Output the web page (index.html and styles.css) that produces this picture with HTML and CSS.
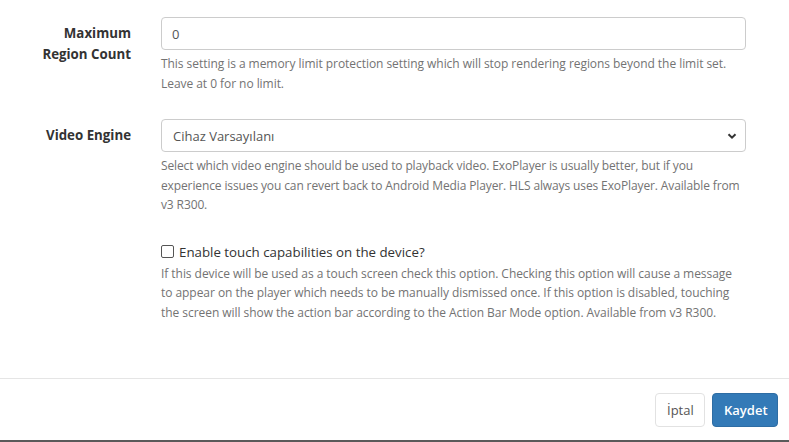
FILE: index.html
```html
<!DOCTYPE html>
<html>
<head>
<meta charset="utf-8">
<link rel="stylesheet" href="styles.css">
</head>
<body>
<div class="modal">
  <div class="body">
    <div class="row row-first">
      <label class="label">Maximum Region Count</label>
      <div class="control">
        <input class="input" type="text" value="0">
        <p class="help">This setting is a memory limit protection setting which will stop rendering regions beyond the limit set. Leave at 0 for no limit.</p>
      </div>
    </div>
    <div class="row row-second">
      <label class="label label-single">Video Engine</label>
      <div class="control">
        <div class="select">
          <span>Cihaz Varsayılanı</span>
          <svg class="chev" width="10" height="8" viewBox="0 0 10 8"><path d="M1.5 2.2 L5 5.7 L8.5 2.2" fill="none" stroke="#333" stroke-width="2"/></svg>
        </div>
        <p class="help help-tight">Select which video engine should be used to playback video. ExoPlayer is usually better, but if you experience issues you can revert back to Android Media Player. HLS always uses ExoPlayer. Available from v3 R300.</p>
      </div>
    </div>
    <div class="row row-third">
      <div class="label"></div>
      <div class="control">
        <label class="check"><span class="box"></span>Enable touch capabilities on the device?</label>
        <p class="help">If this device will be used as a touch screen check this option. Checking this option will cause a message to appear on the player which needs to be manually dismissed once. If this option is disabled, touching the screen will show the action bar according to the Action Bar Mode option. Available from v3 R300.</p>
      </div>
    </div>
  </div>
  <div class="footer">
    <button class="btn btn-default">İptal</button>
    <button class="btn btn-primary">Kaydet</button>
  </div>
</div>
</body>
</html>
```
FILE: styles.css
```css
html, body {
  margin: 0;
  padding: 0;
  background: #fff;
}
body {
  font-family: "Open Sans", "Noto Sans", sans-serif;
  color: #333;
  width: 789px;
  height: 442px;
  overflow: hidden;
}
.modal {
  height: 440px;
  border-bottom: 2px solid #5a5a5a;
  display: flex;
  flex-direction: column;
}
.body {
  flex: 1;
  padding-top: 17px;
  border-bottom: 1px solid #e5e5e5;
}
.row {
  display: flex;
  gap: 30px;
}
.row-second { margin-top: 26px; }
.row-third { margin-top: 27px; }
.label {
  width: 131px;
  flex: none;
  text-align: right;
  font-weight: 700;
  font-size: 13.3px;
  line-height: 21px;
  padding-top: 6px;
  box-sizing: border-box;
  padding-left: 40px;
}
.label-single { padding-top: 6px; }
.control {
  width: 585px;
  flex: none;
}
.input, .select {
  display: flex;
  align-items: center;
  box-sizing: border-box;
  width: 585px;
  height: 33px;
  border: 1px solid #ccc;
  border-radius: 4px;
  padding: 0 10px;
  font-family: inherit;
  font-size: 13px;
  color: #555;
  background: #fff;
  margin: 0;
  outline: none;
}
.select {
  justify-content: space-between;
  padding-left: 11px;
  padding-right: 8px;
}
.chev { display: block; }
.help {
  margin: 4px 0 0;
  font-size: 12px;
  line-height: 19.5px;
  color: #737373;
  letter-spacing: -0.05px;
}
.help-tight { letter-spacing: -0.12px; }
.check {
  display: flex;
  align-items: center;
  font-size: 13.3px;
  color: #333;
  height: 20px;
  margin-top: 0;
}
.box {
  width: 11px;
  height: 11px;
  border: 1px solid #555;
  border-radius: 2px;
  margin-right: 5px;
  background: #fff;
}
.row-third .help { margin-top: 2px; }
.footer {
  height: 61px;
  display: flex;
  justify-content: flex-end;
  align-items: flex-start;
  gap: 7px;
  padding: 14px 11px 0 0;
  box-sizing: border-box;
}
.btn {
  height: 34px;
  border-radius: 4px;
  font-family: inherit;
  font-size: 13px;
  padding: 0 11px;
  margin: 0;
}
.btn-default {
  background: #fff;
  border: 1px solid #e2e2e2;
  color: #555;
  width: 50px;
}
.btn-primary {
  background: #337ab7;
  border: 1px solid #2e6da4;
  color: #fff;
  font-weight: 600;
  width: 66px;
}
```
